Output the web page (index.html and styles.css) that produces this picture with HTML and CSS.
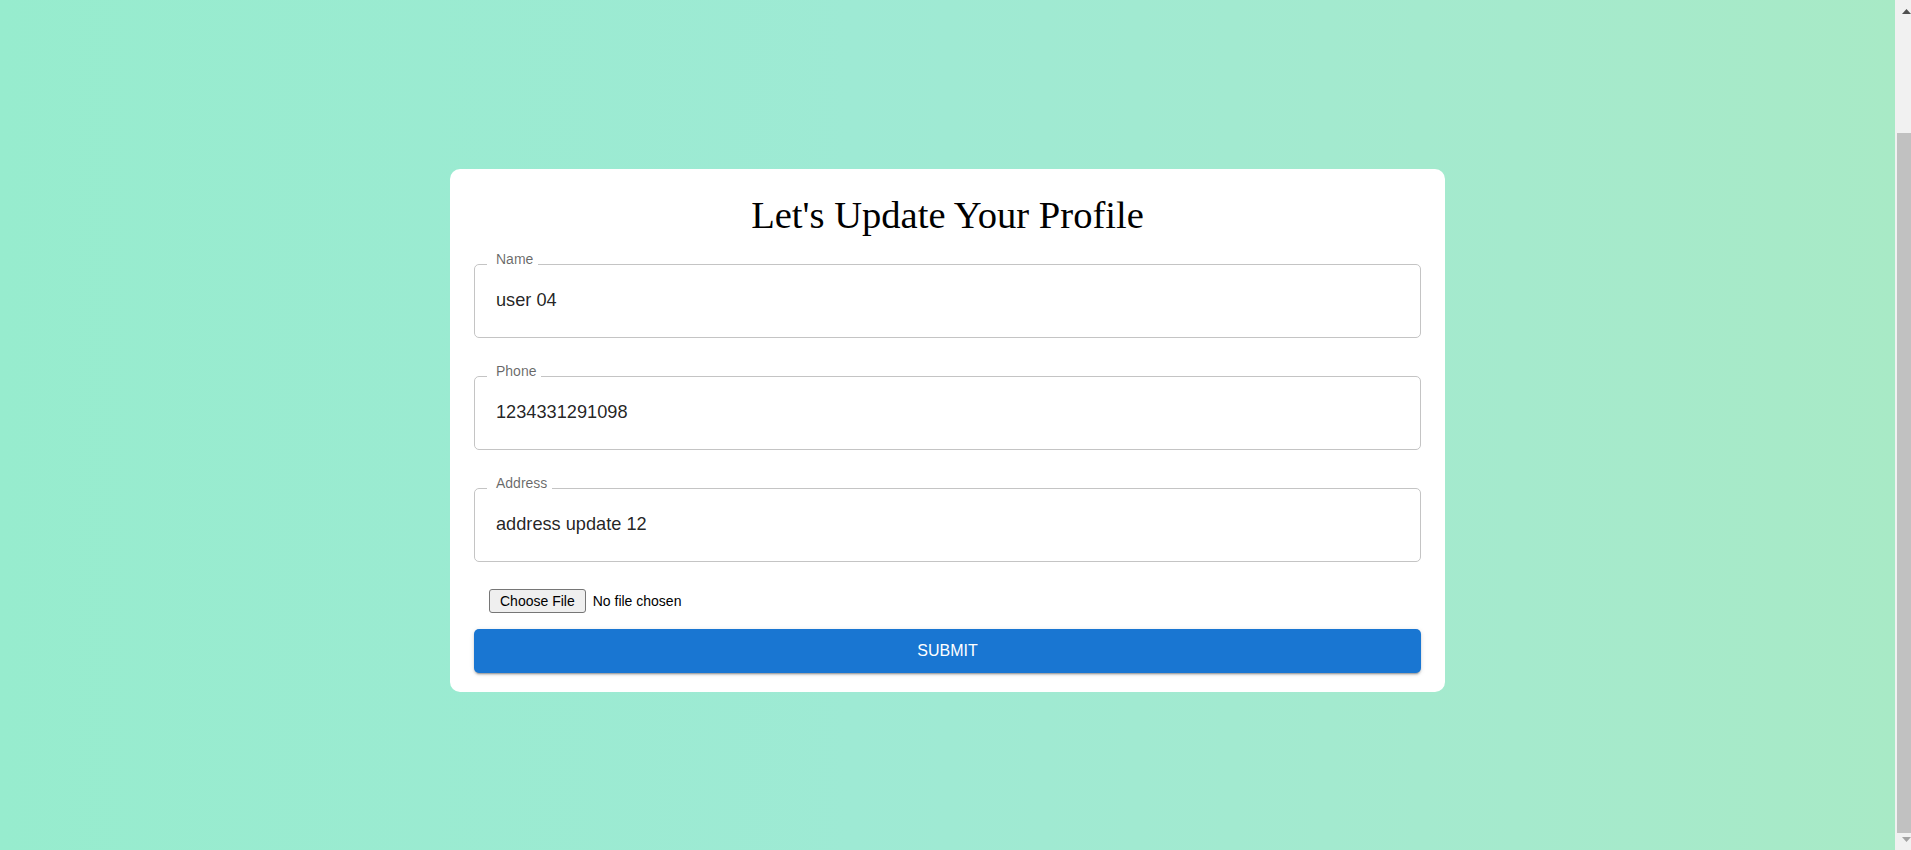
FILE: index.html
```html
<!DOCTYPE html>
<html lang="en">
<head>
<meta charset="utf-8">
<title>Update Profile</title>
<link rel="stylesheet" href="styles.css">
</head>
<body>
<div class="page">
  <form class="card">
    <h1 class="title">Let's Update Your Profile</h1>
    <fieldset class="field">
      <legend class="field-label">Name</legend>
      <input class="field-input" type="text" value="user 04">
    </fieldset>
    <fieldset class="field">
      <legend class="field-label">Phone</legend>
      <input class="field-input" type="text" value="1234331291098">
    </fieldset>
    <fieldset class="field">
      <legend class="field-label">Address</legend>
      <input class="field-input" type="text" value="address update 12">
    </fieldset>
    <div class="file-row">
      <input class="file-input" type="file">
    </div>
    <button class="submit" type="button">Submit</button>
  </form>
</div>
<div class="scrollbar" aria-hidden="true">
  <div class="sb-arrow sb-arrow-up">
    <svg width="9" height="5" viewBox="0 0 9 5"><path d="M0 5 L4.5 0 L9 5 Z" fill="#505050"/></svg>
  </div>
  <div class="sb-track">
    <div class="sb-thumb"></div>
  </div>
  <div class="sb-arrow sb-arrow-down">
    <svg width="9" height="5" viewBox="0 0 9 5"><path d="M0 0 L9 0 L4.5 5 Z" fill="#a3a3a3"/></svg>
  </div>
</div>
</body>
</html>
```

FILE: styles.css
```css
html, body {
  margin: 0;
  padding: 0;
}

body {
  display: flex;
  height: 850px;
  overflow: hidden;
  font-family: "Liberation Sans", Arial, sans-serif;
}

.page {
  flex: 1;
  box-sizing: border-box;
  height: 850px;
  padding-top: 169px;
  background: linear-gradient(90deg, #97ecce 0%, #9eead4 45%, #a5eacd 80%, #a8eac6 100%);
}

.card {
  box-sizing: border-box;
  width: 995px;
  margin: 0 auto;
  padding: 25px 24px 19px;
  background: #ffffff;
  border-radius: 10px;
  display: flex;
  flex-direction: column;
}

.title {
  margin: 0;
  font-family: "Liberation Serif", "Times New Roman", serif;
  font-size: 38.6px;
  font-weight: normal;
  line-height: 42px;
  text-align: center;
  color: #000;
}

.field {
  margin: 15px 0 0;
  padding: 0 12px;
  min-width: 0;
  border: 1px solid #c4c4c4;
  border-radius: 5px;
}

.field + .field {
  margin-top: 25px;
}

.field-label {
  padding: 0 5px 10px 9px;
  font-size: 14px;
  line-height: 16px;
  color: rgba(0, 0, 0, 0.6);
}

.field-input {
  display: block;
  box-sizing: border-box;
  width: 100%;
  height: 73px;
  margin: -13px 0 0;
  padding: 0 0 0 9px;
  border: none;
  outline: none;
  background: transparent;
  font-family: "Liberation Sans", Arial, sans-serif;
  font-size: 18.2px;
  color: rgba(0, 0, 0, 0.87);
}

.file-row {
  margin-top: 27px;
  padding-left: 15px;
  height: 24px;
  display: flex;
  align-items: center;
}

.file-input {
  font-family: "Liberation Sans", Arial, sans-serif;
  font-size: 14px;
  line-height: 16px;
  color: #000;
}

.file-input::file-selector-button {
  box-sizing: border-box;
  height: 24px;
  margin: 0 7px 0 0;
  padding: 3px 10px;
  border: 1px solid #767676;
  border-radius: 3px;
  background: #efefef;
  color: #000;
  font-family: "Liberation Sans", Arial, sans-serif;
  font-size: 14px;
  line-height: 16px;
}

.submit {
  margin-top: 16px;
  height: 44px;
  border: none;
  border-radius: 5px;
  background: #1976d2;
  color: #ffffff;
  font-family: "Liberation Sans", Arial, sans-serif;
  font-size: 16px;
  text-transform: uppercase;
  box-shadow: 0 3px 1px -2px rgba(0, 0, 0, 0.2), 0 2px 2px 0 rgba(0, 0, 0, 0.14), 0 1px 5px 0 rgba(0, 0, 0, 0.12);
  cursor: pointer;
}

.scrollbar {
  width: 16px;
  height: 850px;
  flex: none;
  display: flex;
  flex-direction: column;
  background: #f1f1f1;
}

.sb-arrow {
  height: 17px;
  flex: none;
  display: flex;
  justify-content: flex-end;
  box-sizing: border-box;
}

.sb-arrow-up {
  align-items: flex-start;
  padding-top: 9px;
}

.sb-arrow-down {
  align-items: flex-end;
  padding-bottom: 8px;
}

.sb-arrow svg {
  display: block;
}

.sb-track {
  flex: 1;
  padding-top: 116px;
  display: flex;
  flex-direction: column;
}

.sb-thumb {
  flex: 1;
  margin-left: 2px;
  background: #c1c1c1;
}
```
